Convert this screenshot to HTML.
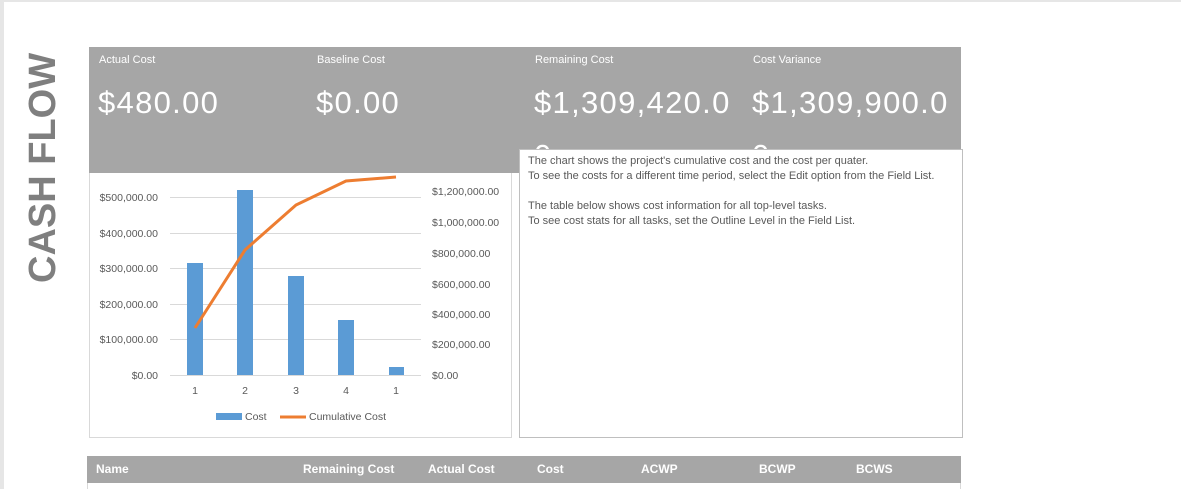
<!DOCTYPE html>
<html><head><meta charset="utf-8"><style>
*{margin:0;padding:0;box-sizing:border-box}
body{width:1181px;height:489px;overflow:hidden;background:#fff;font-family:"Liberation Sans",sans-serif;position:relative}
.a{position:absolute}
.lbl{font-size:11px;color:#fff;top:54px}
.big{font-size:31px;letter-spacing:1.3px;color:#fff;top:76px;line-height:53px;white-space:nowrap}
.th{position:absolute;top:462px;font-size:12px;font-weight:bold;color:#fff}
</style></head><body>
<div class="a" style="left:0;top:0;width:1181px;height:2px;background:#e6e6e6"></div>
<div class="a" style="left:0;top:0;width:4px;height:489px;background:#e6e6e6"></div>
<div class="a" style="left:23px;top:283px;transform-origin:0 0;transform:rotate(-90deg);font-size:38px;font-weight:bold;color:#7f7f7f;white-space:nowrap;line-height:40px">CASH FLOW</div>
<div class="a" style="left:89px;top:47px;width:872px;height:126px;background:#a6a6a6"></div>
<div class="a lbl" style="left:99px">Actual Cost</div>
<div class="a lbl" style="left:317px">Baseline Cost</div>
<div class="a lbl" style="left:535px">Remaining Cost</div>
<div class="a lbl" style="left:753px">Cost Variance</div>
<div class="a big" style="left:98px">$480.00</div>
<div class="a big" style="left:316px">$0.00</div>
<div class="a big" style="left:534px">$1,309,420.0<br>0</div>
<div class="a big" style="left:752px">$1,309,900.0<br>0</div>
<div class="a" style="left:89px;top:173px;width:423px;height:265px;background:#fff;border:1px solid #d9d9d9;border-top:none"></div>
<svg class="a" style="left:0;top:0" width="1181" height="489">
<g stroke="#d9d9d9" stroke-width="1">
<line x1="170" y1="197.5" x2="421" y2="197.5"/><line x1="170" y1="233.5" x2="421" y2="233.5"/><line x1="170" y1="268.5" x2="421" y2="268.5"/><line x1="170" y1="304.5" x2="421" y2="304.5"/><line x1="170" y1="339.5" x2="421" y2="339.5"/><line x1="170" y1="375.5" x2="421" y2="375.5"/>
</g>
<g fill="#5b9bd5">
<rect x="187" y="263" width="16" height="112"/><rect x="237" y="190" width="16" height="185"/><rect x="288" y="276" width="16" height="99"/><rect x="338" y="320" width="16" height="55"/><rect x="389" y="367" width="15" height="8"/>
<rect x="216" y="413" width="26" height="7"/>
</g>
<polyline points="195,328 245,250 296,205 346,181 396,177" fill="none" stroke="#ed7d31" stroke-width="3"/>
<line x1="280" y1="417" x2="306" y2="417" stroke="#ed7d31" stroke-width="3"/>
<g font-family="Liberation Sans" font-size="10.5" fill="#595959" text-anchor="end">
<text x="158" y="201">$500,000.00</text><text x="158" y="237">$400,000.00</text><text x="158" y="272">$300,000.00</text><text x="158" y="308">$200,000.00</text><text x="158" y="343">$100,000.00</text><text x="158" y="379">$0.00</text>
</g>
<g font-family="Liberation Sans" font-size="10.5" fill="#595959">
<text x="432" y="195">$1,200,000.00</text><text x="432" y="226">$1,000,000.00</text><text x="432" y="257">$800,000.00</text><text x="432" y="288">$600,000.00</text><text x="432" y="318">$400,000.00</text><text x="432" y="348">$200,000.00</text><text x="432" y="379">$0.00</text>
<text x="245" y="420">Cost</text><text x="309" y="420">Cumulative Cost</text>
</g>
<g font-family="Liberation Sans" font-size="10.5" fill="#595959" text-anchor="middle">
<text x="195" y="394">1</text><text x="245" y="394">2</text><text x="296" y="394">3</text><text x="346" y="394">4</text><text x="396" y="394">1</text>
</g>
</svg>
<div class="a" style="left:519px;top:149px;width:444px;height:289px;background:#fff;border:1px solid #bfbfbf;padding:4px 0 0 8px;font-size:11px;color:#595959;line-height:15px;white-space:nowrap">
The chart shows the project's cumulative cost and the cost per quater.<br>To see the costs for a different time period, select the Edit option from the Field List.<br><br>The table below shows cost information for all top-level tasks.<br>To see cost stats for all tasks, set the Outline Level in the Field List.</div>
<div class="a" style="left:87px;top:456px;width:874px;height:27px;background:#a6a6a6"></div>
<div class="a" style="left:87px;top:483px;width:874px;height:6px;border-left:1px solid #d9d9d9;border-right:1px solid #d9d9d9"></div>
<div class="th" style="left:96px">Name</div>
<div class="th" style="left:303px">Remaining Cost</div>
<div class="th" style="left:428px">Actual Cost</div>
<div class="th" style="left:537px">Cost</div>
<div class="th" style="left:641px">ACWP</div>
<div class="th" style="left:759px">BCWP</div>
<div class="th" style="left:856px">BCWS</div>
</body></html>
